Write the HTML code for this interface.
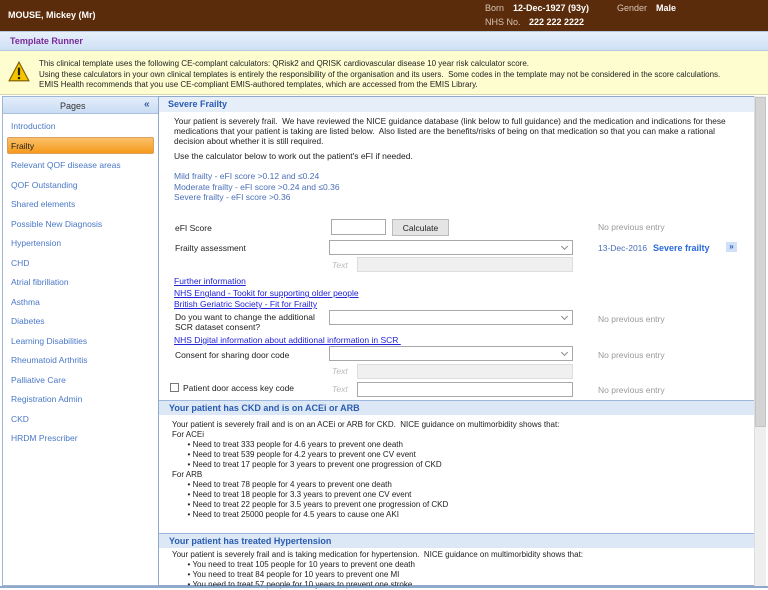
<!DOCTYPE html>
<html><head><meta charset="utf-8"><style>
*{margin:0;padding:0;box-sizing:border-box}
body{width:768px;height:588px;overflow:hidden;background:#fff;font-family:"Liberation Sans",sans-serif;font-size:8.5px;color:#222;position:relative}
.a{position:absolute;white-space:nowrap}
.hdr{left:0;top:0;width:768px;height:31px;background:#5b2c0b}
.w{color:#fff;font-weight:bold;font-size:9px}
.lg{color:#d8c4b4;font-size:9px}
.tr{left:0;top:31px;width:768px;height:20px;background:linear-gradient(#e6f0fb,#cfe0f4);border-top:1px solid #b7c9e0;border-bottom:1px solid #b7c9e0}
.note{left:0;top:51px;width:768px;height:44px;background:#fdfdd0;border-bottom:1px solid #d8d8b0}
.side{left:2px;top:96px;width:157px;height:490px;border:1px solid #9db6d6;background:#fff}
.ph{left:3px;top:97px;width:155px;height:17px;background:linear-gradient(#e4eefb,#c9dcf3);border-bottom:1px solid #a9c0de}
.nav{color:#4a78c8;font-size:8.5px;left:11px}
.main{left:158px;top:96px;width:597px;height:490px;border:1px solid #8fa9cc;background:#fff}
.sh{left:159px;width:595px;height:15px;background:#dde8f6;border-top:1px solid #9db8dc;color:#2a5cb0;font-weight:bold;font-size:9px;padding:2px 0 0 10px}
.b{color:#4a6fb8}
.lk{color:#2323d8;text-decoration:underline}
.gr{color:#999}
.inp{border:1px solid #a8a8a8;background:#fff}
.dis{border:1px solid #ddd;background:#f0f0f0}
.sel{border:1px solid #a8a8a8;background:#fff}
.sel:after{content:"";position:absolute;right:5px;top:3px;width:4px;height:4px;border-right:1px solid #888;border-bottom:1px solid #888;transform:rotate(45deg)}
.t{color:#bbb;font-style:italic}
.sb{left:754px;top:96px;width:12px;height:490px;background:#eee;border-left:1px solid #ddd}
</style></head><body>
<div class="a hdr"></div>
<div class="a w" style="left:8px;top:10px">MOUSE, Mickey (Mr)</div>
<div class="a lg" style="left:485px;top:3px">Born</div>
<div class="a w" style="left:513px;top:3px">12-Dec-1927 (93y)</div>
<div class="a lg" style="left:617px;top:3px">Gender</div>
<div class="a w" style="left:656px;top:3px">Male</div>
<div class="a lg" style="left:485px;top:17px">NHS No.</div>
<div class="a w" style="left:529px;top:17px">222 222 2222</div>
<div class="a tr"></div>
<div class="a" style="left:10px;top:36px;color:#7a2a9a;font-weight:bold;font-size:9px">Template Runner</div>
<div class="a note"></div>
<svg class="a" style="left:8px;top:61px" width="22" height="22" viewBox="0 0 20 20"><path d="M10 1 L19 18 L1 18 Z" fill="#f5c400" stroke="#7a5a00" stroke-width="1"/><rect x="9" y="6" width="2" height="7" fill="#222"/><rect x="9" y="14.5" width="2" height="2" fill="#222"/></svg>
<div class="a" style="left:39px;top:59px;font-size:8px;line-height:10.5px">This clinical template uses the following CE-complant calculators: QRisk2 and QRISK cardiovascular disease 10 year risk calculator score.<br>Using these calculators in your own clinical templates is entirely the responsibility of the organisation and its users.&nbsp; Some codes in the template may not be considered in the score calculations.<br>EMIS Health recommends that you use CE-compliant EMIS-authored templates, which are accessed from the EMIS Library.</div>
<div class="a side"></div>
<div class="a ph"></div>
<div class="a" style="left:60px;top:101px;color:#333;font-size:9px">Pages</div>
<div class="a" style="left:144px;top:99px;color:#3a5a9a;font-weight:bold;font-size:10px">«</div>
<div class="a nav" style="top:121px">Introduction</div>
<div class="a" style="left:7px;top:137px;width:147px;height:17px;background:linear-gradient(#fbc06a,#f59a1c);border:1px solid #d9a060;border-radius:2px"></div>
<div class="a" style="left:11px;top:141px;color:#222">Frailty</div>
<div class="a nav" style="top:160px">Relevant QOF disease areas</div>
<div class="a nav" style="top:180px">QOF Outstanding</div>
<div class="a nav" style="top:199px">Shared elements</div>
<div class="a nav" style="top:219px">Possible New Diagnosis</div>
<div class="a nav" style="top:238px">Hypertension</div>
<div class="a nav" style="top:258px">CHD</div>
<div class="a nav" style="top:277px">Atrial fibrillation</div>
<div class="a nav" style="top:297px">Asthma</div>
<div class="a nav" style="top:316px">Diabetes</div>
<div class="a nav" style="top:336px">Learning Disabilities</div>
<div class="a nav" style="top:355px">Rheumatoid Arthritis</div>
<div class="a nav" style="top:375px">Palliative Care</div>
<div class="a nav" style="top:394px">Registration Admin</div>
<div class="a nav" style="top:414px">CKD</div>
<div class="a nav" style="top:433px">HRDM Prescriber</div>
<div class="a main"></div>
<div class="a sb"></div>
<div class="a" style="left:755px;top:97px;width:11px;height:330px;background:#d4d4d4;border:1px solid #c4c4c4"></div>
<div class="a" style="left:159px;top:97px;width:595px;height:15px;background:#e6eefa"></div>
<div class="a" style="left:168px;top:99px;color:#2a5cb0;font-weight:bold;font-size:9px">Severe Frailty</div>
<div class="a" style="left:174px;top:116px;line-height:10px;font-size:8.3px">Your patient is severely frail.&nbsp; We have reviewed the NICE guidance database (link below to full guidance) and the medication and indications for these<br>medications that your patient is taking are listed below.&nbsp; Also listed are the benefits/risks of being on that medication so that you can make a rational<br>decision about whether it is still required.</div>
<div class="a" style="left:174px;top:151px">Use the calculator below to work out the patient's eFI if needed.</div>
<div class="a b" style="left:174px;top:171px;line-height:10.5px">Mild frailty - eFI score &gt;0.12 and ≤0.24<br>Moderate frailty - eFI score &gt;0.24 and ≤0.36<br>Severe frailty - eFI score &gt;0.36</div>
<div class="a" style="left:175px;top:223px">eFI Score</div>
<div class="a inp" style="left:331px;top:219px;width:55px;height:16px"></div>
<div class="a" style="left:392px;top:219px;width:57px;height:17px;background:#e4e4e4;border:1px solid #bbb;text-align:center;padding-top:3px">Calculate</div>
<div class="a gr" style="left:598px;top:222px">No previous entry</div>
<div class="a" style="left:175px;top:243px">Frailty assessment</div>
<div class="a sel" style="left:329px;top:240px;width:244px;height:15px"></div>
<div class="a b" style="left:598px;top:243px">13-Dec-2016</div>
<div class="a" style="left:653px;top:243px;color:#2a6ad8;font-weight:bold;font-size:9px">Severe frailty</div>
<div class="a" style="left:726px;top:242px;width:11px;height:10px;background:#cfe0f8;color:#2a5cb0;font-size:8px;font-weight:bold;text-align:center;line-height:10px">»</div>
<div class="a t" style="left:332px;top:260px">Text</div>
<div class="a dis" style="left:357px;top:257px;width:216px;height:15px"></div>
<div class="a lk" style="left:174px;top:276px">Further information</div>
<div class="a lk" style="left:174px;top:288px">NHS England - Tookit for supporting older people</div>
<div class="a lk" style="left:174px;top:299px">British Geriatric Society - Fit for Frailty</div>
<div class="a" style="left:175px;top:312px;line-height:10px">Do you want to change the additional<br>SCR dataset consent?</div>
<div class="a sel" style="left:329px;top:310px;width:244px;height:15px"></div>
<div class="a gr" style="left:598px;top:314px">No previous entry</div>
<div class="a lk" style="left:174px;top:335px">NHS Digital information about additional information in SCR&nbsp;</div>
<div class="a" style="left:175px;top:350px">Consent for sharing door code</div>
<div class="a sel" style="left:329px;top:346px;width:244px;height:15px"></div>
<div class="a gr" style="left:598px;top:350px">No previous entry</div>
<div class="a t" style="left:332px;top:366px">Text</div>
<div class="a dis" style="left:357px;top:364px;width:216px;height:15px"></div>
<div class="a" style="left:170px;top:383px;width:9px;height:9px;border:1px solid #777;background:#fff"></div>
<div class="a" style="left:183px;top:383px">Patient door access key code</div>
<div class="a t" style="left:332px;top:384px">Text</div>
<div class="a inp" style="left:357px;top:382px;width:216px;height:15px"></div>
<div class="a gr" style="left:598px;top:385px">No previous entry</div>
<div class="a sh" style="top:400px">Your patient has CKD and is on ACEi or ARB</div>
<div class="a" style="left:172px;top:420px;line-height:10px;font-size:8px">Your patient is severely frail and is on an ACEi or ARB for CKD.&nbsp; NICE guidance on multimorbidity shows that:<br>For ACEi<br>&nbsp;&nbsp;&nbsp;&nbsp;&nbsp;&nbsp;&nbsp;• Need to treat 333 people for 4.6 years to prevent one death<br>&nbsp;&nbsp;&nbsp;&nbsp;&nbsp;&nbsp;&nbsp;• Need to treat 539 people for 4.2 years to prevent one CV event<br>&nbsp;&nbsp;&nbsp;&nbsp;&nbsp;&nbsp;&nbsp;• Need to treat 17 people for 3 years to prevent one progression of CKD<br>For ARB<br>&nbsp;&nbsp;&nbsp;&nbsp;&nbsp;&nbsp;&nbsp;• Need to treat 78 people for 4 years to prevent one death<br>&nbsp;&nbsp;&nbsp;&nbsp;&nbsp;&nbsp;&nbsp;• Need to treat 18 people for 3.3 years to prevent one CV event<br>&nbsp;&nbsp;&nbsp;&nbsp;&nbsp;&nbsp;&nbsp;• Need to treat 22 people for 3.5 years to prevent one progression of CKD<br>&nbsp;&nbsp;&nbsp;&nbsp;&nbsp;&nbsp;&nbsp;• Need to treat 25000 people for 4.5 years to cause one AKI</div>
<div class="a sh" style="top:533px">Your patient has treated Hypertension</div>
<div class="a" style="left:172px;top:550px;line-height:10px;font-size:8px">Your patient is severely frail and is taking medication for hypertension.&nbsp; NICE guidance on multimorbidity shows that:<br>&nbsp;&nbsp;&nbsp;&nbsp;&nbsp;&nbsp;&nbsp;• You need to treat 105 people for 10 years to prevent one death<br>&nbsp;&nbsp;&nbsp;&nbsp;&nbsp;&nbsp;&nbsp;• You need to treat 84 people for 10 years to prevent one MI<br>&nbsp;&nbsp;&nbsp;&nbsp;&nbsp;&nbsp;&nbsp;• You need to treat 57 people for 10 years to prevent one stroke</div>
<div class="a" style="left:0;top:586px;width:768px;height:2px;background:#8fa9cc"></div>
</body></html>
